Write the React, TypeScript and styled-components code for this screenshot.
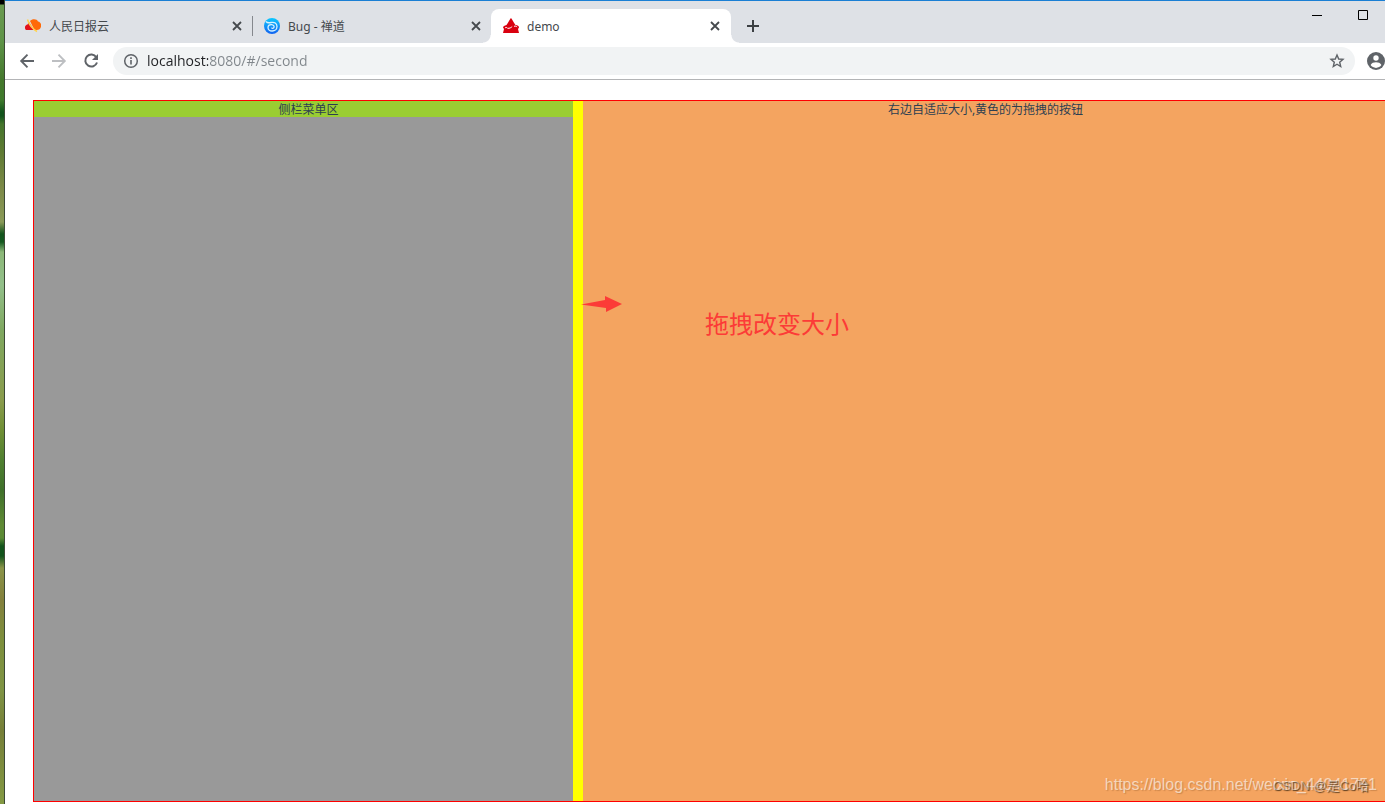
import React, { useState } from "react";
import styled, { createGlobalStyle } from "styled-components";

const GlobalStyle = createGlobalStyle`
  *, *::before, *::after { box-sizing: border-box; }
  body { margin: 0; background: #fff; }
  body, button, input { font-family: "Noto Sans", "Noto Sans CJK SC", sans-serif; }
`;

const Desktop = styled.div`
  display: flex;
  min-height: 100vh;
  overflow: hidden;
`;

const Wallpaper = styled.div`
  flex: 0 0 5px;
  border-right: 1px solid #3c4a36;
  background: linear-gradient(
    to bottom,
    #000 0, #000 4px, #6a9a50 5px, #5f9448 40px, #44782c 80px, #3f7a2c 100px,
    #12541c 112px, #12541c 116px, #44752c 124px, #5d7a32 150px, #7d8a48 190px,
    #8a9a58 222px, #12541c 234px, #155a20 242px, #8cb878 252px, #93c08a 285px, #7fa860 330px,
    #8a9c4c 400px, #6f8f34 430px, #4f8030 460px, #3f702a 490px, #5f8a34 525px,
    #5a8a34 538px, #12541c 546px, #12541c 556px, #8a9448 568px, #83803c 600px, #7d8f3c 640px,
    #7f9444 690px, #767f38 730px, #849a44 804px
  );
`;

const BrowserWindow = styled.div`
  position: relative;
  flex: 1;
  min-width: 0;
  display: flex;
  flex-direction: column;
  border-top: 1px solid #1a7fd4;
  background: #fff;
`;

const TabStrip = styled.div`
  display: flex;
  height: 42px;
  padding: 8px 0 0 8px;
  background: #dee1e6;
`;

const Tab = styled.div<{ $active?: boolean; $divided?: boolean }>`
  position: relative;
  flex: 0 1 240px;
  display: flex;
  align-items: center;
  gap: 8px;
  height: 34px;
  margin-right: -1px;
  padding: 0 10px 0 12px;
  border-radius: 8px 8px 0 0;
  background: ${(p) => (p.$active ? "#fff" : "transparent")};
  &::before {
    content: "";
    position: absolute;
    display: ${(p) => (p.$active ? "block" : "none")};
    left: -8px;
    right: -8px;
    bottom: 0;
    height: 8px;
    background:
      radial-gradient(circle at 0 0, transparent 7px, #fff 8px) left / 8px 8px no-repeat,
      radial-gradient(circle at 100% 0, transparent 7px, #fff 8px) right / 8px 8px no-repeat;
  }
  &::after {
    content: "";
    position: absolute;
    display: ${(p) => (p.$divided ? "block" : "none")};
    right: 0;
    top: 7px;
    width: 1px;
    height: 20px;
    background: #85888d;
  }
`;

const TabTitle = styled.span`
  flex: 1;
  padding-top: 2px;
  font-size: 12px;
  line-height: 18px;
  color: #45494d;
  white-space: nowrap;
`;

const IconButton = styled.button<{ $size: number }>`
  display: flex;
  align-items: center;
  justify-content: center;
  flex: none;
  width: ${(p) => p.$size}px;
  height: ${(p) => p.$size}px;
  padding: 0;
  border: 0;
  background: none;
  color: #5f6368;
`;

const NewTab = styled.div`
  display: flex;
  align-items: center;
  height: 34px;
  margin-left: 9px;
`;

const WindowControls = styled.div`
  display: flex;
  gap: 30px;
  margin: -2px 14px 0 auto;
`;

const Toolbar = styled.div`
  display: flex;
  align-items: center;
  height: 37px;
  padding-left: 14px;
  overflow: hidden;
  border-bottom: 1px solid #b3b4b6;
`;

const NavButtons = styled.div`
  display: flex;
  gap: 16px;
  margin-right: 14px;
`;

const AddressBar = styled.label`
  flex: 1;
  min-width: 0;
  display: flex;
  align-items: center;
  gap: 8px;
  height: 28px;
  padding: 0 10px;
  border-radius: 14px;
  background: #f1f3f4;
  color: #5f6368;
`;

const AddressInput = styled.input`
  flex: 1;
  min-width: 0;
  height: 24px;
  padding: 0;
  border: 0;
  outline: 0;
  font-family: "Open Sans", "Noto Sans", sans-serif;
  font-size: 14px;
  line-height: 24px;
  color: #80868b;
  background: linear-gradient(to right, #202124 61px, #80868b 61px);
  background-clip: text;
  -webkit-background-clip: text;
  -webkit-text-fill-color: transparent;
`;

const Profile = styled.div`
  flex: 0 0 16px;
  margin-left: 12px;
`;

const Page = styled.main`
  flex: 1;
  display: flex;
  padding: 20px 0 2px 28px;
`;

const Frame = styled.div`
  flex: 1;
  min-width: 0;
  display: flex;
  border: 1px solid #f00;
  border-right: 0;
  font-size: 12px;
  line-height: 18px;
  text-align: center;
  color: #2c3e50;
`;

const Sidebar = styled.aside`
  position: relative;
  flex: none;
  background: #999;
`;

const SidebarTitle = styled.div`
  height: 16px;
  background: #9acd32;
`;

const DragHandle = styled.div`
  position: absolute;
  top: 0;
  right: 0;
  bottom: 0;
  width: 10px;
  background: #ff0;
  cursor: col-resize;
`;

const MainPane = styled.section`
  position: relative;
  flex: 1;
  min-width: 0;
  padding-left: 3px;
  background: #f4a460;
`;

const Arrow = styled.svg`
  position: absolute;
  left: -2px;
  top: 195px;
`;

const Note = styled.p`
  position: absolute;
  left: 122px;
  top: 205px;
  margin: 0;
  font-size: 24px;
  line-height: 36px;
  white-space: nowrap;
  color: #fc3b37;
`;

const BlogLink = styled.a`
  position: absolute;
  right: 8px;
  bottom: 9px;
  font-family: "Liberation Sans", sans-serif;
  font-size: 16px;
  line-height: 20px;
  text-decoration: none;
  color: rgba(255, 255, 255, 0.6);
  text-shadow: 1px 1px 1px rgba(120, 70, 30, 0.3);
`;

const Signature = styled.span`
  position: absolute;
  right: 16px;
  bottom: 9px;
  font-family: "Liberation Sans", "Noto Sans CJK SC", sans-serif;
  font-size: 13px;
  line-height: 18px;
  color: rgba(255, 255, 255, 0.45);
  text-shadow: 1px 1px 1px rgba(60, 40, 20, 0.8);
`;

const CloseButton = () => (
  <IconButton $size={12} aria-label="关闭标签页">
    <svg width="12" height="12" viewBox="0 0 12 12">
      <path d="M2 2l8 8M10 2l-8 8" stroke="#45494d" strokeWidth="1.8" />
    </svg>
  </IconButton>
);

const CloudLogo = () => (
  <svg width="16" height="16" viewBox="0 0 16 16">
    <path d="M1 12C-1 10 0 7 2.500 6.500L4 4l5 8z" fill="#e3121a" />
    <path d="M5 3c2-2.500 7-2.500 8 .5 3 .5 4 4 2.500 6.500-1 2-3 2-6 2z" fill="#ff6a08" />
    <path d="M2.500 1.500c1.500 5 4.500 9 9.500 12" fill="none" stroke="#ffd34f" strokeWidth="1.500" />
  </svg>
);

const ZenLogo = () => (
  <svg width="16" height="16" viewBox="0 0 16 16">
    <defs>
      <linearGradient id="zen" x2="0" y2="1">
        <stop stopColor="#0cc8ff" />
        <stop offset="1" stopColor="#1262f0" />
      </linearGradient>
    </defs>
    <circle cx="8" cy="8" r="8" fill="url(#zen)" />
    <path
      d="M2 3.500c1.500 1.800 3 1.500 5 1 3.500-.8 6 1 6 4 0 2.700-2.200 4.500-4.800 4.500S4 11.500 4 9.400s1.700-3 3.600-2.800c1.900.2 2.800 1.500 2.400 2.700s-2.200 1.400-2.600.3"
      fill="none"
      stroke="#d8f3ff"
      strokeWidth="1.300"
    />
  </svg>
);

const DemoLogo = () => (
  <svg width="16" height="16" viewBox="0 0 16 16">
    <path
      d="M8 0c1.200 1 2.500 4.500 4.500 7 2 0 3.500 1 3.500 2.500L15 11l1 4H0l1-4-1-1.500C0 8.500 1.500 7.500 3.500 7 5.500 4.500 6.800 1 8 0z"
      fill="#d9000f"
    />
    <path d="M2 10c1-1 2-.6 2.600.3 2 .2 3.400-.6 4.600-1.800M11 8.300c1.500-.5 2.500 0 3 .8" fill="none" stroke="#fff" strokeWidth="1" />
  </svg>
);

export default function App() {
  const [sidebarWidth, setSidebarWidth] = useState(549);

  const startDrag = (down: React.PointerEvent) => {
    const origin = down.clientX;
    const move = (e: PointerEvent) => setSidebarWidth(Math.max(100, sidebarWidth + e.clientX - origin));
    const stop = () => {
      window.removeEventListener("pointermove", move);
      window.removeEventListener("pointerup", stop);
    };
    window.addEventListener("pointermove", move);
    window.addEventListener("pointerup", stop);
  };

  return (
    <Desktop>
      <GlobalStyle />
      <Wallpaper />
      <BrowserWindow>
        <TabStrip>
          <Tab $divided>
            <CloudLogo />
            <TabTitle>人民日报云</TabTitle>
            <CloseButton />
          </Tab>
          <Tab>
            <ZenLogo />
            <TabTitle>Bug - 禅道</TabTitle>
            <CloseButton />
          </Tab>
          <Tab $active>
            <DemoLogo />
            <TabTitle>demo</TabTitle>
            <CloseButton />
          </Tab>
          <NewTab>
            <IconButton $size={28} aria-label="新标签页">
              <svg width="12" height="12" viewBox="0 0 12 12">
                <path d="M6 0v12M0 6h12" stroke="#3c4043" strokeWidth="2" />
              </svg>
            </IconButton>
          </NewTab>
          <WindowControls>
            <IconButton $size={16} aria-label="最小化">
              <svg width="10" height="10" viewBox="0 0 10 10">
                <path d="M0 5.500h10" stroke="#000" />
              </svg>
            </IconButton>
            <IconButton $size={16} aria-label="最大化">
              <svg width="10" height="10" viewBox="0 0 10 10">
                <path d="M.5.5h9v9h-9z" fill="none" stroke="#000" />
              </svg>
            </IconButton>
          </WindowControls>
        </TabStrip>
        <Toolbar>
          <NavButtons>
            <IconButton $size={16} aria-label="后退">
              <svg width="16" height="16" viewBox="0 0 16 16">
                <path d="M15 8H2.500M8.500 1.700L2.200 8l6.300 6.300" fill="none" stroke="#5f6368" strokeWidth="1.900" />
              </svg>
            </IconButton>
            <IconButton $size={16} aria-label="前进">
              <svg width="16" height="16" viewBox="0 0 16 16">
                <path d="M1 8h12.500M7.500 1.700L13.800 8l-6.300 6.300" fill="none" stroke="#bdbfc2" strokeWidth="1.900" />
              </svg>
            </IconButton>
            <IconButton $size={16} aria-label="重新加载">
              <svg width="16" height="16" viewBox="0 0 16 16">
                <path d="M13.300 4.200A6 6 0 1 0 14 9.500" fill="none" stroke="#5f6368" strokeWidth="2" />
                <path d="M15 1v6H9z" fill="#5f6368" />
              </svg>
            </IconButton>
          </NavButtons>
          <AddressBar>
            <svg width="16" height="16" viewBox="0 0 16 16">
              <circle cx="8" cy="8" r="6.300" fill="none" stroke="#5f6368" strokeWidth="1.500" />
              <path d="M8 7v4.500M8 4.300v1.600" stroke="#5f6368" strokeWidth="1.600" />
            </svg>
            <AddressInput aria-label="地址" defaultValue="localhost:8080/#/second" />
            <IconButton $size={16} aria-label="收藏">
              <svg width="16" height="16" viewBox="0 0 16 16">
                <path
                  d="M8 2l1.700 4 4.300.4-3.300 2.800 1 4.300L8 11.200l-3.700 2.300 1-4.300L2 6.400 6.300 6z"
                  fill="none"
                  stroke="#5f6368"
                  strokeWidth="1.400"
                />
              </svg>
            </IconButton>
          </AddressBar>
          <Profile>
            <IconButton $size={18} aria-label="用户">
              <svg width="18" height="18" viewBox="0 0 18 18">
                <circle cx="9" cy="9" r="9" fill="#5f6368" />
                <circle cx="9" cy="6" r="2.700" fill="#fff" />
                <path d="M3.600 13c1-2 3-2.700 5.400-2.700s4.400.7 5.400 2.700a6.500 6.500 0 0 1-10.800 0z" fill="#fff" />
              </svg>
            </IconButton>
          </Profile>
        </Toolbar>
        <Page>
          <Frame>
            <Sidebar style={{ width: sidebarWidth }}>
              <SidebarTitle>侧栏菜单区</SidebarTitle>
              <DragHandle onPointerDown={startDrag} />
            </Sidebar>
            <MainPane>
              右边自适应大小,黄色的为拖拽的按钮
              <Arrow width="41" height="17" viewBox="0 0 41 17">
                <path d="M0 8.500L24 4V0l17 8-16 8v-4z" fill="#fc3b37" />
              </Arrow>
              <Note>拖拽改变大小</Note>
            </MainPane>
          </Frame>
        </Page>
        <BlogLink href="https://blog.csdn.net/weixin_44041751">https://blog.csdn.net/weixin_44041751</BlogLink>
        <Signature>CSDN @是Co哈</Signature>
      </BrowserWindow>
    </Desktop>
  );
}
